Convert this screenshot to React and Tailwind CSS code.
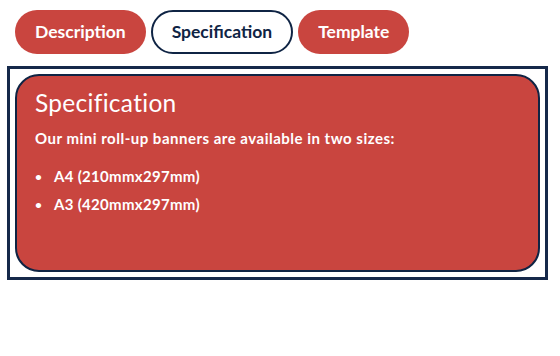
import React, { useState } from "react";

const tabs = ["Description", "Specification", "Template"];

const App = () => {
    const [active, setActive] = useState("Specification");
    return (
        <div
            className="w-[560px] h-[356px] bg-white"
            style={{ fontFamily: "Lato, 'Open Sans', sans-serif" }}
        >
            <div className="flex gap-[5px] pl-[15px] pt-[10px]">
                {tabs.map((tab) => (
                    <button
                        key={tab}
                        onClick={() => setActive(tab)}
                        className={`h-[44px] rounded-full text-[17.5px] font-bold ${
                            active === tab
                                ? "px-[19px] bg-white text-[#0f2444] border-2 border-[#0f2444]"
                                : "px-[20px] bg-[#c9453f] text-white"
                        }`}
                    >
                        {tab}
                    </button>
                ))}
            </div>
            <div className="mx-[7px] mt-[12px] w-[541px] h-[214px] border-[3px] border-[#16294a] p-[5px]">
                <div className="h-full rounded-[24px] border-2 border-[#0f2444] bg-[#c9453f] text-white px-[18px] pt-[11px]">
                    <h2 className="text-[24.5px] leading-[32px] tracking-[0.3px]">Specification</h2>
                    <p className="mt-[8px] text-[15px] font-bold tracking-[0.5px]">
                        Our mini roll-up banners are available in two sizes:
                    </p>
                    <ul className="mt-[13px] text-[15px] font-bold tracking-[0.3px]">
                        <li className="flex items-center h-[28px]">
                            <span className="w-[19px] text-[12px]">•</span>A4 (210mmx297mm)
                        </li>
                        <li className="flex items-center h-[28px]">
                            <span className="w-[19px] text-[12px]">•</span>A3 (420mmx297mm)
                        </li>
                    </ul>
                </div>
            </div>
        </div>
    );
};

export default App;
